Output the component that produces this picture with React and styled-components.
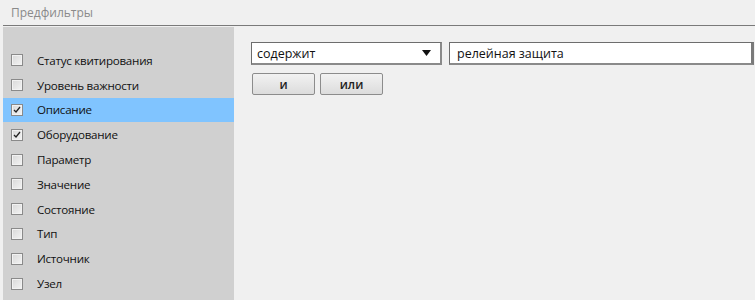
import React from 'react';
import styled, { createGlobalStyle } from 'styled-components';

const GlobalStyle = createGlobalStyle`
  *, *::before, *::after {
    box-sizing: border-box;
  }
  html, body {
    margin: 0;
    padding: 0;
    background: #f0f0f0;
    font-family: "Open Sans", "Noto Sans", "Liberation Sans", sans-serif;
  }
`;

const fields = [
  { name: 'Статус квитирования', checked: false },
  { name: 'Уровень важности', checked: false },
  { name: 'Описание', checked: true, selected: true },
  { name: 'Оборудование', checked: true },
  { name: 'Параметр', checked: false },
  { name: 'Значение', checked: false },
  { name: 'Состояние', checked: false },
  { name: 'Тип', checked: false },
  { name: 'Источник', checked: false },
  { name: 'Узел', checked: false },
];

export default function App() {
  return (
    <>
      <GlobalStyle />
      <Page>
        <Header>Предфильтры</Header>
        <Body>
          <FieldList>
            {fields.map((f) => (
              <FieldRow key={f.name} selected={f.selected}>
                <CheckBox>{f.checked && <CheckMark />}</CheckBox>
                <FieldName>{f.name}</FieldName>
              </FieldRow>
            ))}
          </FieldList>
          <Editor>
            <ConditionRow>
              <Select>
                <SelectValue>содержит</SelectValue>
                <Arrow />
              </Select>
              <TextInput>релейная защита</TextInput>
            </ConditionRow>
            <ButtonRow>
              <Button>и</Button>
              <Button>или</Button>
            </ButtonRow>
          </Editor>
        </Body>
      </Page>
    </>
  );
}

const CheckMark = () => (
  <svg width="8" height="8" viewBox="0 0 8 8">
    <path d="M1 4 L3 6 L7 1" fill="none" stroke="#222" strokeWidth="1.3" />
  </svg>
);

const Arrow = () => (
  <svg width="9" height="6" viewBox="0 0 9 6">
    <path d="M0 0 H9 L4.5 6 Z" fill="#111" />
  </svg>
);

const Page = styled.div`
  width: 755px;
  height: 300px;
  overflow: hidden;
  display: flex;
  flex-direction: column;
  background: #f0f0f0;
`;

const Header = styled.div`
  height: 26px;
  line-height: 26px;
  margin-left: 3px;
  padding-left: 8px;
  font-size: 12px;
  color: #8a8a8a;
  border-bottom: 1px solid #7a7a7a;
`;

const Body = styled.div`
  flex: 1;
  display: flex;
  padding-left: 3px;
  padding-top: 1px;
`;

const FieldList = styled.div`
  width: 231px;
  background: #d0d0d0;
  padding-top: 21px;
  display: flex;
  flex-direction: column;
`;

const FieldRow = styled.div`
  height: 24.8px;
  display: flex;
  align-items: center;
  padding-left: 8px;
  background: ${(p) => (p.selected ? '#80c4ff' : 'transparent')};
`;

const CheckBox = styled.div`
  width: 12px;
  height: 12px;
  border: 1px solid #8a8a8a;
  background: linear-gradient(135deg, #d8d8d8, #f4f4f4);
  box-shadow: inset 0 0 0 1px #f2f2f2;
  display: flex;
  align-items: center;
  justify-content: center;
  margin-right: 14px;
  flex-shrink: 0;
`;

const FieldName = styled.span`
  font-size: 11.6px;
  letter-spacing: -0.25px;
  color: #111;
`;

const Editor = styled.div`
  flex: 1;
  padding: 15px 1px 0 17px;
  display: flex;
  flex-direction: column;
  gap: 8px;
`;

const ConditionRow = styled.div`
  display: flex;
  gap: 7px;
`;

const Select = styled.div`
  width: 191px;
  height: 23px;
  background: #fff;
  border-style: solid;
  border-width: 1px 2px 2px 1px;
  border-color: #6d6d6d #8a8a8a #8a8a8a #6d6d6d;
  display: flex;
  align-items: center;
  justify-content: space-between;
  padding: 0 9px 0 5px;
`;

const SelectValue = styled.span`
  font-size: 12.5px;
  color: #111;
`;

const TextInput = styled.div`
  flex: 1;
  height: 23px;
  background: #fff;
  border-style: solid;
  border-width: 1px 3px 2px 1px;
  border-color: #6d6d6d #7a7a7a #8a8a8a #6d6d6d;
  display: flex;
  align-items: center;
  padding-left: 7px;
  font-size: 12.5px;
  color: #111;
`;

const ButtonRow = styled.div`
  display: flex;
  gap: 5px;
  padding-left: 1px;
`;

const Button = styled.div`
  width: 63px;
  height: 22px;
  border: 1px solid #8c8c8c;
  border-radius: 2px;
  background: linear-gradient(#f2f2f2, #dcdcdc);
  display: flex;
  align-items: center;
  justify-content: center;
  font-size: 12px;
  font-weight: 600;
  color: #222;
`;
